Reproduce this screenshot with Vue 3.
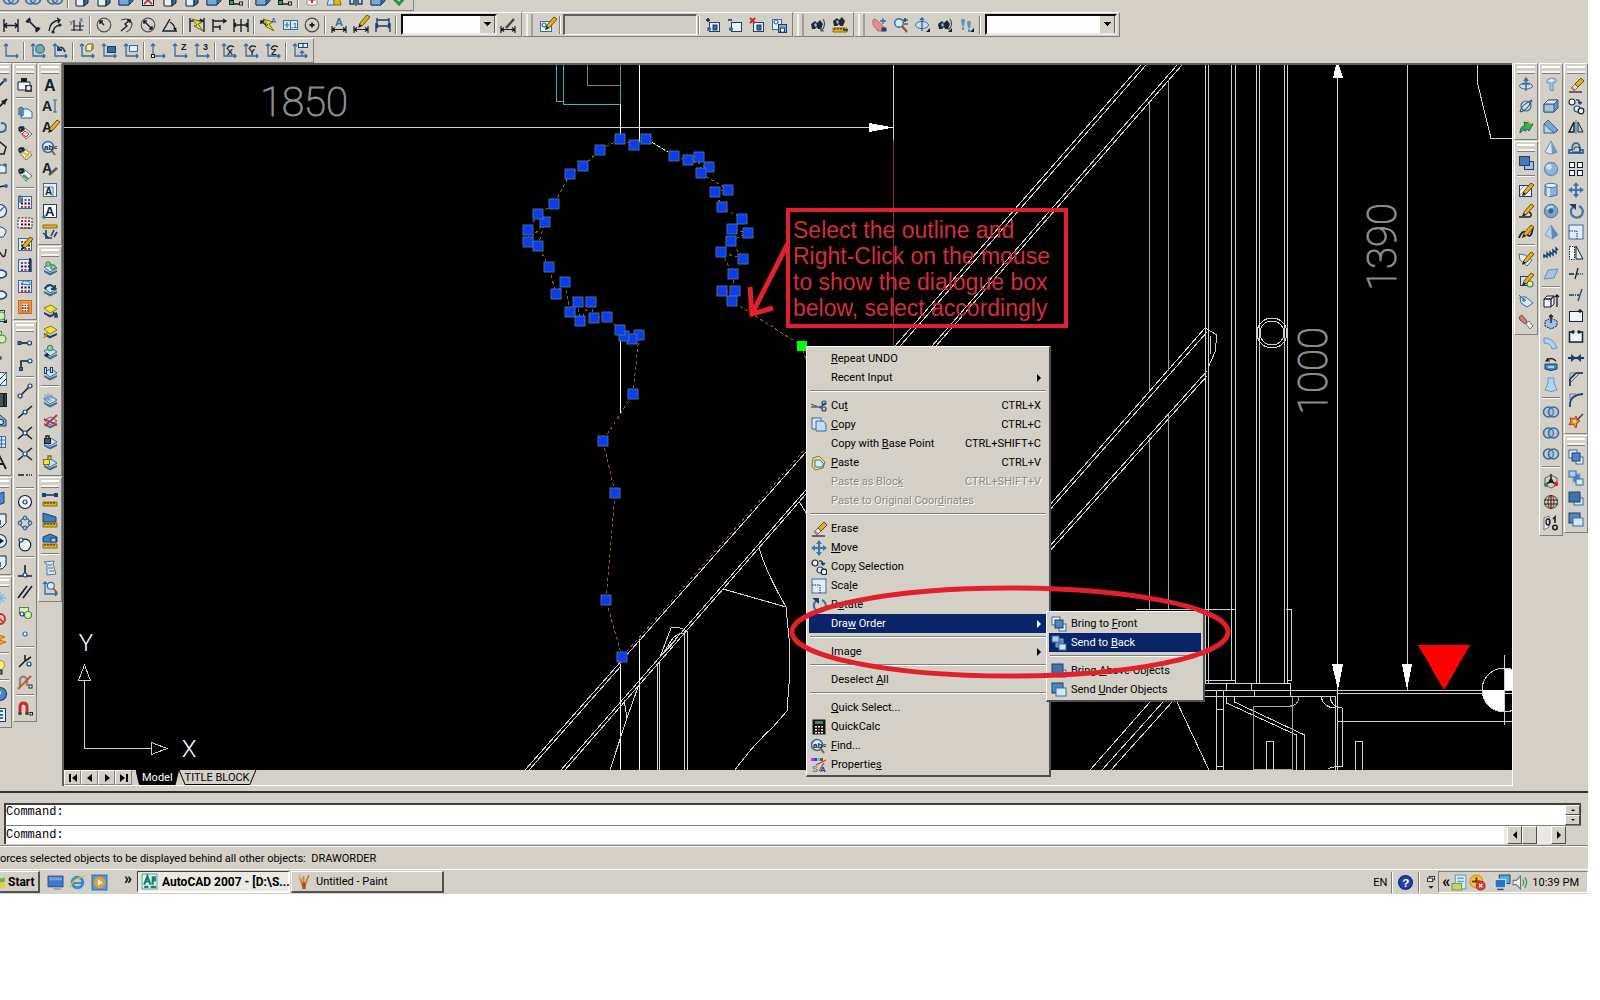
<script setup>
import { ref } from "vue";

const INK = "#16202c";
const BLUE = "#3a6a9e";
const NAVY = "#1c3f6e";
const PALE = "#c9dff2";
const GOLD = "#e2b41c";
const RED = "#cc2a2a";

// Tiny helpers for the 16x16 toolbar glyphs
const line = (d, c = INK, w = 1.4) => `<path d="${d}" fill="none" stroke="${c}" stroke-width="${w}"/>`;
const area = (d, f = BLUE, c = "none") => `<path d="${d}" fill="${f}" stroke="${c}"/>`;
const ring = (x, y, r, c = INK, f = "none", w = 1.2) =>
  `<circle cx="${x}" cy="${y}" r="${r}" fill="${f}" stroke="${c}" stroke-width="${w}"/>`;
const box = (x, y, w, h, f = PALE, c = BLUE) =>
  `<rect x="${x}" y="${y}" width="${w}" height="${h}" fill="${f}" stroke="${c}"/>`;
const letter = (t, x, y, s, c = INK) =>
  `<text x="${x}" y="${y}" font-size="${s}" font-weight="700" font-family="Liberation Sans, sans-serif" fill="${c}">${t}</text>`;

const pencil = area("M5 13L6 9L13 1L16 3L9 11Z", GOLD, "#6b4a10") + area("M4 14L5.5 10L8 12Z", INK);
const axes = line("M3 1V13H15M1 3L3 1L5 3M13 11L15 13L13 15", BLUE, 1.3);
const dims = line("M1 9V16M15 9V16M1 12.5H15M4 10.5L1.5 12.5L4 14.5M12 10.5L14.5 12.5L12 14.5", INK, 1.2);
const bolt = area("M3 2L13 5L9 7L14 14L5 9L8 8Z", "#e6e02a", "#6d6a10");
const layers = area("M2 7L9 4L15 8L8 12Z", PALE, BLUE) + area("M2 10L8 13L15 10V12L8 15.5L2 12Z", BLUE);
const goldLayers = area("M2 6L9 3L15 7L8 11Z", "#f2e23a", "#8a7a10") + area("M2 10L8 13L15 10V12L8 15.5L2 12Z", NAVY);
const dots = [4, 7.5, 11]
  .map((x) => [5, 8.5, 12].map((y, i) => `<rect x="${x}" y="${y}" width="2" height="2" fill="${i === 1 ? INK : RED}"/>`).join(""))
  .join("");
const grid = box(1.5, 2.5, 13, 12, "#dcebf8", BLUE) + dots;
const clip = ring(4, 4, 2, INK, "none", 1.4);
const tag = area("M2 6L8 3L15 9L9 14Z", "#e8f0f5", "#5a7284") + area("M3 2L7 1L8 5L4 7Z", "#3c4650") + clip;
const ruler = area("M1 11H15V15H1Z", GOLD, "#8a6a10") + line("M3 11V13M6 11V13M9 11V13M12 11V13", INK, 1);
const camera = area("M1 7L5 4L7 6L10 3L13 7L11 12H8L7 10L5 12H2Z", "#1d2936") + area("M4 7L6 6L7 9L5 10Z", "#9fb4c8");
const glass = ring(6, 6, 4.3, BLUE, "#d6e9f8", 1.4) + line("M9 9L14 15", "#8a5a2a", 2.2);
const knot = (x, y) => ring(x, y, 2, NAVY, "#e4f6ff", 1.2);
const corner = area("M11 15L15 15L15 11Z", INK);

const icons = {
  rings: ring(5.5, 8, 5, BLUE, "#8ebad955", 1.6) + ring(10.5, 8, 5, BLUE, "#8ebad955", 1.6),
  solid: area("M2 4H10V15H2Z", "#e6eef5", INK) + area("M10 4L14 1V12L10 15Z", BLUE, INK),
  solidx: box(2.5, 3.5, 11, 11, "#e6eef5", INK) + line("M4 5L12 13M12 5L4 13", RED, 1.8),
  cubefill: area("M5 1H15V10L11 14H1V5Z", BLUE, NAVY) + area("M1 5H11V14H1Z", "#79a8d4", NAVY),
  tree: line("M3 3V13H12M6 8H12", INK) + box(1.5, 9.5, 4, 4, "#4c9c4c", INK) + box(11.5, 11, 3, 3, PALE, INK),
  plusred: area("M3 2H13V14H3Z", "#f4f4f4", "#999") + line("M8 5V12M4.5 8.5H11.5", RED, 2),
  mirrorgold: area("M1 14L4 3L8 3V14Z", PALE, BLUE) + area("M8 14V3L12 1L15 14Z", GOLD, "#8a6a10"),
  shells: line("M2 2V13H6V2M10 2V13H14V2M8 1V15", NAVY, 1.4),
  check: line("M2 8L7 13L15 4", "#2b9448", 3) + area("M4 3H10V7H4Z", RED),
  dimLinear: line("M1 2V15M15 2V15M1 8.5H15M4 6L1.5 8.5L4 11M12 6L14.5 8.5L12 11"),
  dimAligned: line("M1 5L5 1M11 15L15 11M3 3L13 13M3 6V3H6M10 13H13V10", INK, 1.7),
  dimArc: line("M2 14Q3 4 13 3M10 1L13 3L11 6M6 15Q7 9 13 8", INK) + ring(6, 15, 1) + ring(13, 8, 1),
  dimOrd: line("M5 3V14M5 9H15M11 5V14M2 13H14", INK, 1.2) + letter("Y", 0, 8, 6, BLUE) + letter("X", 10, 5, 6, BLUE),
  dimRadius: ring(8, 8, 6.8, "#555") + line("M8 8L4 4M4 7V4H7"),
  dimJog: line("M3 3Q14 0 14 8Q13 13 8 15", "#555", 1.2) + line("M3 14L9 9L7 7L12 3M9 3H12V6"),
  dimDia: ring(8, 8, 6.8, "#555") + line("M4 4L12 12M4 7V4H7M12 9V12H9"),
  dimAngle: line("M8 2L1 14H15M8 5Q13 8 13 13", INK, 1.4) + area("M11 11L15 11L13 14Z", INK),
  dimQuick: line("M1 1V15M15 1V15M1 4H15M11 2L14 4L11 6") + bolt,
  dimBase: line("M2 2V15M2 4H15M9 8V13M2 10H9M12 2L15 4L12 6"),
  dimCont: line("M1 2V15M8 2V15M15 2V15M1 8H15M3 6L1 8L3 10M13 6L15 8L13 10"),
  leader: bolt + line("M1 4L6 8M1 7V4H4", INK, 1.6) + letter("A", 11, 6, 7, BLUE),
  tol: box(1.5, 3.5, 14, 9, "#dcebf8", BLUE) + line("M8.5 3.5V12.5M5 5V11M2.5 8H7.5", BLUE, 1.1) + letter(".1", 9, 11, 7, BLUE),
  center: ring(8, 8, 6.8, "#444") + line("M8 5.5V10.5M5.5 8H10.5", INK, 1.8),
  dimEdit: letter("A", 4, 9, 11, BLUE) + dims,
  dimPencil: dims + `<g transform="translate(1 -3)">${pencil}</g>`,
  dimUpdate: line("M2 1V8M14 1V8M2 3H14M1 6V15M15 6V15M1 9H15M3 7L1 9L3 11M13 7L15 9L13 11", NAVY),
  dimStyle: dims + line("M6 11L14 2", "#444", 2.4),
  refEdit: box(1.5, 4.5, 11, 10, "#e8f2fb", BLUE) + ring(5, 8, 2, BLUE) + `<g transform="translate(2 -1)">${pencil}</g>`,
  refAdd: box(4.5, 5.5, 10, 9, "#e8f2fb", NAVY) + box(8, 8, 4, 5, BLUE, NAVY) + line("M1 3H5M3 1V5", INK) + ring(4, 12, 1.5, BLUE, BLUE),
  refSub: box(4.5, 5.5, 10, 9, "#e8f2fb", NAVY) + line("M1 3H5", INK) + ring(4, 12, 1.5, BLUE, BLUE),
  refDel: box(4.5, 5.5, 10, 9, "#e8f2fb", NAVY) + box(8, 8, 4, 5, BLUE, NAVY) + line("M1 1L6 6M6 1L1 6", RED, 2),
  refSave: box(1.5, 2.5, 9, 10, "#e8f2fb", BLUE) + ring(5, 5, 2, BLUE) + box(7.5, 7.5, 8, 8, "#7fa9d6", NAVY) + box(9.5, 11, 4, 4, "#fff", NAVY),
  orbit: camera + line("M13 2Q17 8 11 14M11 11V14H14", "#40566e", 1.2),
  camMove: `<g transform="translate(0 -3)">${camera}</g>` + ruler + line("M11 13H16", INK),
  pan: area("M2 3L4 2L10 7L13 10L12 14L7 14L2 8Z", "#e08f92", "#b6686c") + line("M12 1V7M9 4H15", BLUE, 1.3) + box(11, 11, 4, 3, NAVY, NAVY),
  zoom: glass + line("M12 1V5M10 3H15M11 7H15", INK, 1.1),
  orbit3d: `<ellipse cx="7" cy="8" rx="6.5" ry="3.5" fill="${PALE}" stroke="${BLUE}"/>` + line("M7 1V14M5 3L7 1L9 3", BLUE) + corner,
  swivel: camera + line("M13 2Q17 8 11 13", "#40566e", 1.2) + corner,
  walk: area("M2 3Q5 0 6 4L5 9H3ZM8 5Q11 2 12 6L11 11H9Z", "#5d93bd") + area("M3 10H5V13H3ZM9 12H11V15H9Z", "#5d93bd") + corner,
  ucs: axes,
  ucsWorld: axes + ring(10, 6, 4.3, BLUE, "#6fb0a8"),
  ucsPrev: axes + line("M6 7Q10 1 13 9M6 3V7H10", NAVY, 1.8),
  ucsFace: axes + area("M7 3L9 1H14V6L12 8H7Z", "#f0ead0", "#5f5a1a") + area("M12 3L14 1V6L12 8Z", "#a8982a"),
  ucsObj: axes + box(6.5, 3.5, 8, 6, BLUE, NAVY),
  ucsView: axes + box(6.5, 2.5, 8, 6, "#e6f0fa", BLUE),
  ucsOrigin: axes + box(1.5, 11.5, 3, 3, "#fff", INK),
  ucsZ: axes + letter("Z", 9, 7, 9),
  ucs3: axes + letter("3", 9, 7, 9),
  rotX: axes + line("M6 6Q8 1 13 4", INK) + letter("X", 6, 12, 9),
  rotY: axes + line("M6 6Q8 1 13 4", INK) + letter("Y", 6, 12, 9),
  rotZ: axes + line("M6 6Q8 1 13 4", INK) + letter("Z", 6, 12, 9),
  ucsApply: axes + box(6.5, 0.5, 9, 4, "#e6f0fa", NAVY) + line("M10 8V13M8 10L10 8L12 10M11 1V4", BLUE),

  line: line("M2 14L14 2", INK, 1.6) + ring(13, 3, 1.5, BLUE, BLUE),
  xline: line("M1 15L15 1", INK, 1.8) + area("M9 3L15 1L13 7Z", INK),
  pline: line("M2 13H9Q14 13 14 8Q14 4 9 4", BLUE, 1.8),
  polygon: line("M8 2L14 7L12 14H4L2 7Z", INK, 1.5),
  rect: box(1, 4, 13, 8, "#e6eef5", NAVY) + ring(13, 4, 1.2, BLUE, BLUE),
  arc: line("M2 14Q2 4 14 4", INK) + ring(14, 4, 1.3, BLUE, BLUE),
  circle: ring(8, 8, 6.5, NAVY, "#e6f0fa") + line("M8 8L12 4", BLUE),
  cloud: area("M4 12Q0 8 5 6Q7 1 11 4Q16 6 13 10Q12 14 8 13Z", "#e6f0fa", NAVY),
  spline: line("M2 12Q5 2 9 9T14 4", INK),
  ellipse: `<ellipse cx="8" cy="8" rx="6.5" ry="4" fill="#e6f0fa" stroke="${NAVY}" stroke-width="1.5"/>`,
  insert: box(1.5, 2.5, 11, 11, "#e6f0fa", NAVY) + ring(9, 8, 4, "#4c8c3c", "#d2e8b8") + corner,
  block: box(1.5, 2.5, 8, 7, "#d2e8b8", "#4c8c3c") + ring(10, 10, 4, "#4c8c3c", "#d2e8b8"),
  point: ring(8, 8, 1.5, BLUE, BLUE),
  hatch: box(1.5, 1.5, 13, 13, "#e6f0fa", BLUE) + line("M1 9L9 1M1 15L15 1M7 15L15 7", NAVY, 1),
  gradient: box(1.5, 1.5, 13, 13, "#4b544c", INK) + line("M4 1V15M12 1V15", INK, 2),
  region: area("M2 13V6L8 2L14 7V13Z", "#7fb0da", NAVY) + ring(9, 9, 2.5, NAVY, "#e6f0fa"),
  table: box(1.5, 2.5, 12, 11, "#e6f0fa", BLUE) + line("M1.5 6H14M1.5 10H14M5.5 2.5V14M9.5 2.5V14", BLUE, 1.2),
  mtext: line("M2 14L8 2L14 14M5 9H11", INK, 1.8),
  sheetBlue: area("M3 4L12 1V12L3 15Z", "#4a86cc", NAVY),
  play: ring(8, 8, 6.5, NAVY, "#e6f0fa") + area("M6 4L12 8L6 12Z", INK),
  cubeDark: area("M5 2H14V11L10 15H1V6Z", "#e6eef5", INK) + area("M4 8H9V13H4Z", BLUE),
  sun: line("M8 2V14M2 8H14M4 4L12 12M12 4L4 12", "#7fb8dc", 1.3),
  noSign: ring(8, 8, 5, RED, "#f4d0b8", 2) + line("M5 5L11 11", RED, 1.6),
  flame: area("M3 2L13 5L7 8L14 10L4 14Z", "#f0b020", "#c07010"),
  bulb: ring(8, 6, 4.5, "#b8a020", "#f6ee7a") + box(6, 11, 4, 4, "#777", INK),
  globe: ring(8, 8, 6.5, NAVY, "#4a86cc") + area("M6 4Q10 5 9 8Q6 9 5 7Z", "#cfe3f7"),
  calcBlue: box(2.5, 1.5, 11, 13, "#e6f0fa", NAVY) + line("M5 4H11M5 8H11M5 11H11", BLUE, 1.8),

  bag: area("M1 5H13V13H1Z", "#f4f4f4", INK) + area("M4 1H10V5H4Z", INK) + area("M8 8H15V15H8Z", "#39434d") + ring(11.5, 11, 1.5, "#fff", "#fff"),
  attach: area("M4 5H11L15 8V14H4Z", "#e8f2fb", BLUE) + line("M2 11V5Q4 2 6 5V11Q4 13 4 10V6", BLUE, 1.4),
  tagRed: tag + area("M8 6L12 9L9 12L5 9Z", "#f4d4d4", RED),
  tagGold: tag + line("M7 13L14 5M5 6L12 10", GOLD, 1.8),
  tagGreen: tag + line("M6 8L11 12", "#4a9a4a", 2.5),
  gridClip: grid + line("M3 1V8H5V3", BLUE),
  gridDash: `<rect x="1" y="3" width="14" height="10" fill="#eee" stroke="${INK}" stroke-dasharray="2 1.4"/>` + dots,
  gridPencil: grid + pencil,
  gridSide: grid + line("M13 1V15", NAVY, 2),
  gridCloud: grid + area("M5 6Q5 2 9 3Q14 3 13 7Z", PALE, BLUE),
  gridGold: box(1.5, 1.5, 13, 13, "#f3a23c", "#c46a10") + box(4, 4, 8, 9, "#f2e8dc", "#c46a10") + `<g transform="translate(2 2) scale(.75)">${dots}</g>`,
  snapTrack: line("M2 8H11", INK, 1.6) + box(1, 6.5, 3, 3, BLUE, NAVY) + knot(12.5, 8),
  snapFrom: line("M4 14V5H11", INK, 1.6) + box(2.5, 11.5, 3, 3, BLUE, NAVY) + knot(13, 5),
  snapEnd: line("M3 13L13 3", INK, 1.5) + knot(13, 3) + knot(3, 13),
  snapMid: line("M1 14L15 2", INK, 1.6) + knot(8, 8),
  snapInt: line("M1 2L15 14M15 2L1 14", INK, 1.6) + knot(8, 8),
  snapApp: line("M1 2L6 6M10 10L15 14M15 2L10 6M6 10L1 14", INK, 1.6) + knot(8, 8),
  snapExt: line("M1 8H7M9 8H11M12 8H13M14 8H15", INK, 1.6),
  snapCen: ring(8, 8, 6.5, INK, "#f4f8fb") + knot(8, 8),
  snapQuad: ring(8, 8, 5, INK, "none", 1) + ring(8, 3, 1.8, BLUE, "#9fc8e8") + ring(8, 13, 1.8, BLUE, "#9fc8e8") + ring(3, 8, 1.8, BLUE, "#9fc8e8") + ring(13, 8, 1.8, BLUE, "#9fc8e8"),
  snapTan: ring(8, 9, 5.8, INK, "#eef2f4") + knot(4, 4),
  snapPerp: line("M8 2V13M1 13H15", INK, 1.6) + knot(8, 12),
  snapPar: line("M1 14L10 2M6 14L15 2", INK, 1.6),
  snapIns: box(2.5, 2.5, 9, 6, "#d9efb8", "#4c8c3c") + ring(11, 10, 3.5, "#4c8c3c", "#d9efb8") + knot(5, 9),
  snapNode: ring(8, 8, 2, BLUE, "#e4f6ff"),
  snapNear: line("M2 14L8 8L8 2M8 8L14 4", INK, 1.6) + knot(12, 11),
  snapNone: line("M3 13V5Q6 0 10 5V12", "#8a8a8a", 2.4) + line("M1 15L14 2", "#d2502a", 2) + box(12, 11, 3, 3, "#fff", INK),
  magnet: line("M3 13V6Q3 2 6.5 2Q10 2 10 6V13", RED, 3) + area("M1.5 11H4.5V14H1.5ZM8.5 11H11.5V14H8.5Z", "#444") + box(13, 11.5, 2.5, 2.5, "#fff", INK),

  textA: letter("A", 2, 14, 16),
  textI: letter("A", 0, 13, 14) + line("M11 2H15M13 2V14M11 14H15", BLUE, 1.2),
  textPencil: letter("A", 0, 13, 14) + `<g transform="translate(2 0)">${pencil}</g>`,
  findText: ring(6, 7, 5.5, BLUE, "#d6e9f8", 1.5) + letter("ab", 2, 10, 8) + line("M10 11L13 15", "#8a5a2a", 2) + letter("c", 12, 9, 6),
  textBrush: letter("A", 0, 12, 14) + line("M7 14L15 7", "#555", 2.4),
  textScale: box(1.5, 1.5, 13, 13, "#e8f2fb", BLUE) + letter("A", 3, 13, 10) + line("M1 5H11V15", "#555", 0.8),
  textJust: box(1.5, 1.5, 13, 13, "#fff", NAVY) + letter("A", 3, 13, 13) + ring(2, 14, 1.2, BLUE, BLUE),
  textSpace: area("M1 1H15V4H1Z", GOLD, "#8a6a10") + line("M4 6V14H10M1 9L7 14M12 6L9 12M15 8L12 13", NAVY, 1.6),
  layProps: layers + ring(6, 4, 2.2, "#3f8f5c", "#9ed0b0") + ring(11, 7, 2.2, "#3f8f5c", "#9ed0b0"),
  layPrev: layers + line("M3 8Q7 0 13 8M9 8H13V4", NAVY, 1.8),
  layGoldA: goldLayers + line("M11 10L15 15M12 15H15V12", NAVY, 1.6),
  layGoldB: goldLayers + line("M2 15L6 9", "#b89a10", 1.8),
  layIso: layers + ring(8, 4, 2.6, "#3f8f5c", "#9ed0b0") + line("M5 9V13M3 11H7", INK, 1.3),
  layUn: layers + box(2.5, 2.5, 2, 6, PALE, NAVY) + box(8.5, 2.5, 2, 5, PALE, NAVY),
  layFrz: layers + line("M6 1V11M1 6H11M2.5 2.5L9.5 9.5M9.5 2.5L2.5 9.5", "#7d9ec0", 1.1),
  layOff: layers + line("M2 6L15 12M15 2L3 13", RED, 1.8),
  layLock: layers + box(2.5, 4.5, 6, 5, "#47546a", INK) + line("M4 4V2H7V4", INK),
  layUnlock: layers + box(1.5, 4.5, 6, 5, "#f0e436", "#7a7410") + line("M6 4V1H9V4", "#7a7410"),
  dist: line("M2 4H14", NAVY, 1.6) + area("M0 2H4V6H0ZM12 2H16V6H12Z", NAVY) + ruler,
  areaM: area("M1 1L14 5V10H1Z", "#3f7fb8", NAVY) + ruler,
  massM: area("M1 4L8 1L15 4V9H1Z", "#3f7fb8", NAVY) + box(9, 5, 5, 4, "#8fd0e8", NAVY) + ruler,
  list: area("M2 2L12 1L11 4L14 14L5 15L5 4Z", "#dfe9f2", "#56789a") + line("M6 5H10M6 8H11M7 11H12", BLUE, 1.2),
  idPoint: axes + `<g transform="translate(4 0) scale(.8)">${glass}</g>`,

  orb: `<ellipse cx="8" cy="9" rx="6.5" ry="3" fill="${PALE}" stroke="${BLUE}"/>` + line("M8 1V14M6 4L8 1L10 4M4 7H12", BLUE, 1.5),
  planet: ring(8, 8, 5, BLUE, "#cfe0ee") + line("M2 14Q3 7 14 2M2 14Q10 12 14 2", "#44586c", 1.1),
  swirl: area("M2 14Q2 7 7 7L6 3L15 5L11 12L9 10Q5 10 2 14Z", "#35b05a", "#1a6a34") + area("M9 1L15 5L11 5Z", GOLD) + area("M4 9L9 11L7 13Z", BLUE),
  squares: box(6.5, 6.5, 9, 8, "#9cc4e6", NAVY) + box(1.5, 1.5, 10, 9, "#4a7ab0", NAVY),
  hatchPencil: box(1.5, 3.5, 12, 11, "#e6f0fa", NAVY) + line("M2 8L6 4M2 13L11 4M6 14L13 7", "#888", 0.8) + pencil,
  curvePencil: line("M1 14H12Q15 11 11 9", INK) + pencil,
  splinePencil: line("M1 14Q5 4 9 10T15 3", INK, 1.8) + pencil,
  tagPencil: area("M1 3L7 4L14 9L9 15L2 9Z", "#e8f4fa", BLUE) + pencil,
  blockPencil: box(2.5, 4.5, 8, 9, PALE, NAVY) + ring(12, 12, 3, "#4c8c3c", "#d9efb8") + pencil,
  tagBlue: area("M2 4L8 4L15 10L9 14L3 10Z", "#d6ebf8", BLUE) + ring(6, 7, 1.2, BLUE) + line("M1 2L6 7", BLUE, 1),
  tagHand: area("M1 3L4 1L9 7L7 10L2 6Z", "#c08078", "#8a504a") + area("M8 10L11 7L15 12L12 15Z", "#f0f0f0", "#777"),
  polysolid: area("M4 3L8 1L13 2V5L10 6V14L7 13V6L4 6Z", "#9fc4e6", "#6f96be") + area("M8 2L12 3L9 5L5 4Z", "#e2eef8"),
  boxSolid: area("M1 6L5 2H15V10L11 14H1Z", "#6e94bc", "#38597c") + area("M1 6H11V14H1Z", "#a9c3de", "#38597c") + area("M1 6L5 2H15L11 6Z", "#dbe8f4", "#38597c"),
  wedge: area("M1 5L5 1L15 11L11 14H1Z", "#b9d0e6", "#3f6288") + area("M5 1L15 11L11 14L1 5Z", "#7fa6cf", "#3f6288"),
  cone: area("M8 1L14 12Q8 16 2 12Z", "#dbe8f4", "#6f8cab") + area("M8 2L14 12L9 14Z", "#6f98c2"),
  sphere: ring(8, 8, 6.6, "#6a8cb2", "#8fb2d8") + ring(6, 6, 2.2, "#cfe2f4", "#cfe2f4"),
  cyl: area("M2 3V13Q8 16 14 13V3Z", "#8fb2d8", "#476e9a") + area("M4 4H7V14H4Z", "#cfe2f4") + `<ellipse cx="8" cy="3.5" rx="6" ry="2.2" fill="#e2eef8" stroke="#476e9a"/>`,
  torus: ring(8, 8, 4.6, "#7ba3cd", "#3f6288", 4.4) + ring(8, 8, 6.8, "#3f6288", "none", 0.8) + line("M4 6Q6 3 10 4", "#dcebf8", 1.6),
  pyramid: area("M8 1L15 11L9 15L2 11Z", "#b4d0ec", "#7b9fc6") + area("M8 1L15 11L9 15Z", "#5f88bd"),
  helix: line("M1 13L1 10L4 12L4 8L7 11L7 7L10 10L10 5L13 8L13 3L15 5", NAVY, 1.5),
  plane: area("M5 4L15 3L11 12L1 13Z", "#a9c3de", "#6f8cab"),
  extrude: area("M1 6L4 3H11V11L8 14H1Z", "#f2f2f2", INK) + line("M1 6H8V14M8 6L11 3M14 14V2M12 4L14 2L16 4", INK, 1.3),
  pushpull: `<path d="M8 4L14 7V12L8 15L2 12V7Z" fill="#9cc0e2" stroke="${INK}" stroke-dasharray="2 1"/>` + line("M8 9V1M6 3L8 1L10 3", INK),
  sweep: area("M1 3Q10 2 14 13L9 14Q8 8 1 8Z", "#b2d0ec", "#6b94bd"),
  revolve: area("M2 8H14V13Q8 16 2 13Z", "#4a83be", NAVY) + area("M5 10H11V12H5Z", "#b2d4f0") + line("M3 5Q8 0 13 5M5 2L3 5L7 5", INK, 1.2),
  loft: area("M5 1H11L11 6L14 13Q8 16 2 13L5 6Z", "#b2d4f0", "#6b94bd"),
  tripod: line("M8 8V1M8 8L2 12M8 8L14 12", INK, 1.6) + line("M2 5L8 2L14 5V12L8 15L2 12Z", "#555", 0.9) + ring(8, 8, 1.5, INK, INK) + ring(13, 11, 1.6, RED, RED) + ring(3, 12, 1.4, "#2c8c4c", "#2c8c4c"),
  sphereRgb: ring(8, 8, 6.5, "#2c7c4c") + `<ellipse cx="8" cy="8" rx="3" ry="6.5" fill="none" stroke="${RED}" stroke-width="1.3"/>` + line("M1 6H15M1 10H15M8 1V15", "#222", 1.1),
  bits: area("M1 3L6 1V12L1 15Z", "#eee", "#777") + `<ellipse cx="5" cy="7" rx="2" ry="3" fill="none" stroke="${INK}" stroke-width="1.400"/>` + line("M10 4L12 2V8", INK, 1.6) + ring(12, 12.5, 2.2, INK, "none", 1.6),

  erase: line("M1 15H14", INK, 1.2) + area("M3 11L7 7L10 10L6 14Z", "#e8e8f0", "#766") + area("M7 7L13 1L16 4L10 10Z", GOLD, "#6b4a10") + area("M3 11L4.5 9.5L7.5 12.5L6 14Z", "#e07a6a"),
  copyObj: ring(4, 4, 3, INK, "#eef4f8") + ring(9, 11, 3, NAVY, "#eef4f8") + ring(13, 13, 2.8, INK, "#eef4f8") + line("M8 2Q12 1 12 6M10 4L12 6L14 4", NAVY),
  mirror: line("M6 3V13H1Z", INK) + area("M10 3V13H15Z", "#b4d0ec", INK) + line("M8 1V15", BLUE, 1),
  offset: line("M1 13H15V10H12Q12 3 8 3Q4 3 4 10H1Z", BLUE, 1.8) + line("M4 12H12V9Q12 7 8 7Q6 7 6 10", NAVY, 1.1),
  array: box(1.5, 1.5, 5, 5, "#eef4f8", INK) + box(9.5, 1.5, 5, 5, "#eef4f8", INK) + box(1.5, 9.5, 5, 5, "#eef4f8", INK) + box(9.5, 9.5, 5, 5, "#eef4f8", INK),
  move: line("M8 2V14M2 8H14", "#3f74ad", 2) + area("M8 0L11 4H5ZM8 16L11 12H5ZM0 8L4 5V11ZM16 8L12 5V11Z", "#3f74ad"),
  rotate: line("M5 4A6 6 0 1 0 11 3", "#3f74ad", 2.2) + area("M1 1H8V7Z", NAVY),
  scale: box(1, 1, 14, 14, "#dfedf8", BLUE) + `<path d="M1 7H9V15" fill="none" stroke="${INK}" stroke-dasharray="1.5 1"/>`,
  stretch: area("M8 1L15 14H8Z", "#dfedf8", INK) + `<rect x="1.5" y="1.5" width="5" height="13" fill="#fff" stroke="${INK}" stroke-dasharray="1.5 1"/>`,
  trim: line("M1 8H6M10 2L7 13", INK, 1.3) + line("M9 8H11M12 8H13M14 8H15", NAVY, 1.3),
  extend: line("M1 8H6M14 2L10 14", NAVY, 1.3) + line("M7 8H8M9 8H11", INK, 1.3),
  breakPt: box(1.5, 3.5, 13, 10, "#eef4f8", INK) + ring(12, 3, 1.2, INK, INK),
  breakGap: area("M1 3H15V13H1Z", "#eef4f8") + line("M5 3H1.5V13H14.5V3H11", INK, 1.5) + ring(5, 3, 1.1, INK, INK) + ring(11, 3, 1.1, INK, INK),
  join: line("M0 8H16", INK, 1.8) + area("M3 4L8 8L3 12ZM13 4L8 8L13 12Z", NAVY),
  chamfer: line("M2 15V8L8 2H15", INK, 1.6) + line("M2 8V2H8", BLUE, 0.8) + line("M2 12L11 3", BLUE, 1),
  fillet: line("M2 15V11Q3 3 15 2", NAVY, 1.8) + line("M2 8V2H8", BLUE, 0.8),
  explode: area("M2 5L6 6L8 3L9 6L12 8L9 10L8 15L5 11L1 12L3 8Z", "#f0902a", "#b2341c") + area("M5 7L8 7L8 10L5 10Z", "#f8e060") + line("M9 7L15 1", "#444", 1.6),

  toFront: box(1, 1, 8, 8, "#e6f2fb", BLUE) + box(8, 8, 7, 7, "#e6f2fb", BLUE) + box(4, 4, 8, 8, "#4f86c0", NAVY),
  toBack: box(5, 4, 7, 8, "#4f86c0", "#7fa9d6") + box(1, 1, 7, 6, "#a9cdec", BLUE) + box(8, 9, 7, 6, "#d4e8f8", BLUE),
  above: box(6, 7, 9, 7, "#d4e8f8", BLUE) + box(1, 1, 11, 10, "#4272a8", NAVY),
  under: box(1, 1, 11, 10, "#4f86c0", NAVY) + box(5, 6, 10, 8, "#d4e8f8", BLUE),
  cut: line("M0 6L10 10M0 9H10", "#5f6470", 1.3) + line("M9 10L14 5", NAVY, 1.2) + ring(13, 5, 2, NAVY) + ring(13, 11, 2, NAVY),
  copy: box(1, 1, 9, 11, "#d4e8f8", BLUE) + area("M5 4H12L15 7V14H5Z", "#c3ddf3", BLUE),
  paste: area("M2 3L8 1L14 7L12 13L4 15L1 11Z", "#e8dc90", "#8a7a30") + area("M4 5H9L12 8V12H4Z", "#d8eaf8", BLUE),
  calc: box(2, 1, 12, 14, "#141414", "#141414") + area("M4 2H12V5H4Z", "#5a7a60") + `<g fill="#eee"><path d="M4 7h2v1.500h-2zM7 7h2v1.500h-2zM10 7h2v1.500h-2zM4 10h2v1.500h-2zM10 10h2v1.500h-2zM4 13h2v1.500h-2zM7 13h2v1.500h-2zM10 13h2v1.500h-2z"/><path fill="#d33" d="M7 10h2v1.500h-2z"/></g>`,
  props: area("M0 1H3V4H0Z", "#e22ae2") + area("M3 1H6V4H3Z", "#2a4ae2") + area("M6 1H9V4H6Z", "#2ae2d8") + area("M9 1H12V4H9Z", RED) + letter("S", 1, 15, 9, "#7a7a8a") + letter("A", 9, 15, 8, NAVY) + line("M5 8L15 3M8 14L13 6", "#b24a5a", 1.3),

  desktop: box(1, 2, 14, 10, "#3f76c8", "#2a4f94") + area("M2 3H14V6H2Z", "#6fa0e4") + area("M6 13H13V15H6Z", "#9aa6b8"),
  ie: ring(8, 8, 5, "#2e8fd8", "none", 2.8) + line("M4 8.500H13", "#2e8fd8", 2) + line("M1 13Q3 4 15 2", "#e8b92e", 1.4),
  player: box(1, 1, 14, 14, "#49a0dc", "#2a70ac") + ring(8, 8, 4.8, "#f29a2a", "#f29a2a") + area("M6.500 5L11 8L6.500 11Z", "#fff"),
  acad: box(1, 1, 14, 14, "#e6f4f0", "#5aa698") + line("M3 11L6 3L9 11M4 8H8M11 3V11M13 3V8M3 13H7M9 13H14", "#12806c", 2),
  paint: line("M4 2L8 15M8 3V15M13 2L8 15", "#b98a3a", 1.8) + area("M3 1H6V5H3Z", "#e2b8a0") + area("M7 9H10V15H7Z", "#b8402c"),
  flag: area("M1 4Q4 2 7 4V8Q4 6 1 8Z", "#e2582c") + area("M8 4Q11 6 14 4V8Q11 10 8 8Z", "#6cb83a") + area("M1 9Q4 7 7 9V13Q4 11 1 13Z", "#3a76d8") + area("M8 9Q11 11 14 9V13Q11 15 8 13Z", "#f2c830"),
  help: ring(8, 8, 6.5, "#15257a", "#2340b0") + letter("?", 5, 12, 11, "#fff"),
  restore: box(6, 1, 6, 4, "#eee", INK) + box(4, 3, 6, 4, "#eee", INK) + area("M5 12H11L8 15Z", INK),
  trayNotes: box(4, 1, 10, 13, "#d8eef8", "#5aa0c8") + area("M1 9H10V15H1Z", "#c8cf70", "#7a9a40") + line("M6 4H12M6 7H12", "#5aa0c8"),
  trayWarn: ring(7, 7, 6, "#d89a1c", "#f6c23a") + line("M3 7H11M7 3V8", "#5a3a10", 1.8) + ring(11, 11, 4, RED, "#e03a3a") + line("M9.500 9.500L12.500 12.500M12.500 9.500L9.500 12.500", "#fff", 1.3),
  trayNet: box(5, 1, 10, 8, "#58a8e8", "#1e4f8a") + box(1, 5, 10, 8, "#2f74c0", "#d8e6f4") + line("M3 14.500H9", "#33485e"),
  traySound: area("M1 6H4L8 2V14L4 10H1Z", "#f2f4f6", "#6a7480") + line("M10 5Q12 8 10 11M12 3Q15.500 8 12 13", "#3f9a50", 1.2),
};

// "|" is a separator inside a toolbar
const topRow = "rings rings rings | solid solid cubefill solidx solid solid cubefill tree | cubefill tree | plusred mirrorgold shells cubefill check".split(" ");
const dimRow =
  "dimLinear dimAligned dimArc dimOrd | dimRadius dimJog dimDia dimAngle | dimQuick dimBase dimCont | leader tol center | dimEdit dimPencil dimUpdate |".split(" ");
const ucsRow = "ucs | ucsWorld ucsPrev | ucsFace ucsObj ucsView | ucsOrigin ucsZ ucs3 | rotX rotY rotZ | ucsApply".split(" ");
const refRow = ["refAdd", "refSub", "refDel", "refSave"];
const walkRow = ["pan", "zoom", "orbit3d", "swivel", "walk"];

const leftDocks = [
  [
    "line xline pline polygon rect arc circle cloud spline ellipse ellipse insert block point hatch gradient region table mtext",
    "sheetBlue cubeDark play cubeDark",
    "sun noSign flame | bulb | globe calcBlue",
  ],
  [
    "bag | attach tagRed tagGold tagGreen | gridClip gridDash gridPencil gridSide gridCloud gridGold",
    "snapTrack snapFrom | snapEnd snapMid snapInt snapApp snapExt | snapCen snapQuad snapTan | snapPerp snapPar snapIns snapNode | snapNear snapNone | magnet",
  ],
  [
    "textA textI textPencil findText textBrush textScale textJust textSpace",
    "layProps layPrev layGoldA layGoldB layIso layUn | layFrz layOff layLock layUnlock",
    "dist areaM massM | list idPoint",
  ],
].map((dock) => dock.map((bar) => bar.split(" ")));

const rightDocks = [
  ["orb planet swirl", "squares | hatchPencil curvePencil splinePencil | tagPencil blockPencil tagBlue tagHand"],
  ["polysolid boxSolid wedge cone sphere cyl torus pyramid helix plane | extrude pushpull sweep revolve loft | rings rings rings | tripod sphereRgb bits"],
  [
    "erase copyObj mirror offset array move rotate scale stretch trim extend breakPt breakGap join chamfer fillet explode",
    "toFront toBack above under",
  ],
].map((dock) => dock.map((bar) => bar.split(" ")));

// "&" goes before the mnemonic letter
const item = (label, opts = {}) => {
  const [before, rest] = label.includes("&") ? label.split("&") : [label, ""];
  return { before, key: rest.charAt(0), after: rest.slice(1), ...opts };
};
const divider = { divider: true };

const menu = [
  item("&Repeat UNDO"),
  item("Recent Input", { sub: true }),
  divider,
  item("Cu&t", { icon: "cut", keys: "CTRL+X" }),
  item("&Copy", { icon: "copy", keys: "CTRL+C" }),
  item("Copy with &Base Point", { keys: "CTRL+SHIFT+C" }),
  item("&Paste", { icon: "paste", keys: "CTRL+V" }),
  item("Paste as Bloc&k", { keys: "CTRL+SHIFT+V", disabled: true }),
  item("Paste to Original Coor&dinates", { disabled: true }),
  divider,
  item("Erase", { icon: "erase" }),
  item("&Move", { icon: "move" }),
  item("Cop&y Selection", { icon: "copyObj" }),
  item("Sca&le", { icon: "scale" }),
  item("R&otate", { icon: "rotate" }),
  item("Dra&w Order", { sub: true, active: true }),
  divider,
  item("Ima&ge", { sub: true }),
  divider,
  item("Deselect &All"),
  divider,
  item("&Quick Select..."),
  item("QuickCalc", { icon: "calc" }),
  item("&Find...", { icon: "findText" }),
  item("Propertie&s", { icon: "props" }),
];

const submenu = [
  item("Bring to &Front", { icon: "toFront" }),
  item("Send to &Back", { icon: "toBack", active: true }),
  divider,
  item("Bring &Above Objects", { icon: "above" }),
  item("Send &Under Objects", { icon: "under" }),
];

const menus = [
  { name: "context", items: menu },
  { name: "order", items: submenu },
];

// Vertices of the selected polyline, in drawing order
const grips = [
  [622, 657], [606, 600], [615, 493], [603, 441], [633, 394], [639, 335], [632, 339], [624, 336], [620, 330],
  [607, 317], [594, 318], [591, 302], [580, 321], [578, 302], [570, 312], [565, 282], [556, 294], [549, 267],
  [538, 246], [545, 222], [528, 242], [528, 230], [538, 214], [554, 204], [570, 174], [583, 166], [600, 150],
  [620, 139], [634, 145], [646, 139], [674, 156], [688, 160], [709, 167], [699, 157], [701, 173], [728, 190],
  [715, 192], [722, 207], [742, 219], [732, 229], [748, 233], [731, 241], [743, 259], [721, 252], [733, 274],
  [735, 291], [722, 291], [732, 301],
];
const outline = "M" + grips.map((g) => g.join(" ")).join("L") + "L802 346L806 360V448Z";

const command = ref("Command:");
const style = ref("");
const view = ref("");
const layout = ref("Model");
</script>

<template>
  <div class="app">
    <header class="bars">
      <div class="row clipped">
        <div class="bar">
          <template v-for="(name, i) in topRow" :key="i">
            <i v-if="name === '|'" class="sep"></i>
            <button v-else class="tool" :aria-label="name"><svg viewBox="0 0 16 16" v-html="icons[name]"></svg></button>
          </template>
        </div>
      </div>

      <div class="row">
        <div class="bar">
          <template v-for="(name, i) in dimRow" :key="i">
            <i v-if="name === '|'" class="sep"></i>
            <button v-else class="tool" :aria-label="name"><svg viewBox="0 0 16 16" v-html="icons[name]"></svg></button>
          </template>
          <select v-model="style" class="combo" aria-label="Dimension style"><option value=""></option></select>
          <button class="tool" aria-label="dimStyle"><svg viewBox="0 0 16 16" v-html="icons.dimStyle"></svg></button>
        </div>
        <div class="bar">
          <i class="handle"></i>
          <button class="tool" aria-label="refEdit"><svg viewBox="0 0 16 16" v-html="icons.refEdit"></svg></button>
          <i class="sep"></i>
          <input class="field" type="text" disabled aria-label="Reference name" />
          <i class="sep"></i>
          <button v-for="name in refRow" :key="name" class="tool" :aria-label="name">
            <svg viewBox="0 0 16 16" v-html="icons[name]"></svg>
          </button>
        </div>
        <div class="bar">
          <i class="handle"></i>
          <button class="tool" aria-label="orbit"><svg viewBox="0 0 16 16" v-html="icons.orbit"></svg></button>
          <button class="tool" aria-label="camMove"><svg viewBox="0 0 16 16" v-html="icons.camMove"></svg></button>
        </div>
        <div class="bar">
          <i class="handle"></i>
          <button v-for="name in walkRow" :key="name" class="tool" :aria-label="name">
            <svg viewBox="0 0 16 16" v-html="icons[name]"></svg>
          </button>
          <i class="sep"></i>
          <select v-model="view" class="combo wide" aria-label="View"><option value=""></option></select>
        </div>
      </div>

      <div class="row">
        <div class="bar">
          <template v-for="(name, i) in ucsRow" :key="i">
            <i v-if="name === '|'" class="sep"></i>
            <button v-else class="tool" :aria-label="name"><svg viewBox="0 0 16 16" v-html="icons[name]"></svg></button>
          </template>
        </div>
      </div>
    </header>

    <main class="work">
      <div class="docks left">
        <div v-for="(dock, d) in leftDocks" :key="d" class="dock">
          <div v-for="(bar, b) in dock" :key="b" class="vbar">
            <i class="vhandle"></i>
            <template v-for="(name, i) in bar" :key="i">
              <i v-if="name === '|'" class="vsep"></i>
              <button v-else class="vtool" :aria-label="name"><svg viewBox="0 0 16 16" v-html="icons[name]"></svg></button>
            </template>
          </div>
        </div>
      </div>

      <section class="drawing">
        <div class="canvas">
          <svg class="sheet">
            <g transform="translate(-64 -65)" fill="none" stroke="#d2d2d2" shape-rendering="crispEdges">
              <!-- wall and frame -->
              <path stroke="#35b8b8" d="M556.500 65V101.500H563M563.500 65V104.500H620M620.500 85V104" />
              <path stroke="#808080" d="M587.500 65V85.500H620M620.500 65V85" />
              <path stroke="#fff" d="M620.500 104V139M639.500 65V142M651 142L668 152M620.500 340V413M620.500 664V771M639.500 639V771" />

              <!-- 1850 dimension -->
              <path d="M64 127.500H870M893.500 65V140" />
              <path stroke="#a3242c" d="M893.500 140V347" />
              <path fill="#fff" stroke="none" d="M869 123L894 127.500L869 132Z" />

              <!-- stair stringers -->
              <path d="M1141 65L895 346M1146 65L895 352M1177 65L932 346M1182 65L936 346" />
              <path d="M806 452L525 770M621 666L529 770M806 490L561 770M806 494L565 770" />
              <path d="M1205 328L1040 516M1207 332L1040 521M1207 371L1040 557M1207 376L1040 562" />
              <path d="M1205 328L1217 335L1215 352L1208 368V376M1210 336V354" />
              <path d="M1150 702L1090 770M1163 702L1102 770M1172 702L1111 770M1177 702L1209 770" />
              <path stroke="#a4a4a4" d="M1149.500 102V391M1149.500 437V610M1168.500 80V371M1168.500 415V610" />

              <!-- posts -->
              <path d="M1205.500 65V683M1208.500 65V683M1231.500 65V680M1235.500 65V683M1256.500 65V683M1259.500 65V683M1284.500 65V683M1287.500 65V683" />
              <path d="M1136 609.500H1236M1286 609.500H1291.500V680H1288" />
              <circle cx="1272" cy="333" r="15" />
              <circle cx="1272" cy="333" r="12" />
              <path d="M1204 680.500H1236M1204 683.500H1291M1204 690.500H1338M1204 696.500H1336M1226.500 683V690M1251.500 683V690M1254.500 690V697M1290.500 683V697" />
              <path d="M1216.500 690V770M1223.500 690V770M1217 709.500H1223M1217 766.500H1223" />
              <path d="M1226.500 696V703L1296.500 735V770M1234.500 696V702L1304.500 735V770" />
              <path stroke="#a4a4a4" d="M1253.500 770V706.500H1292M1292.500 697V769.500H1253M1299 697Q1298 706 1290 706" />
              <path d="M1321 697Q1324 708 1335 708M1330 697Q1332 708 1342.500 708V766Q1334 766 1328 769M1335.500 697V770M1337.500 690V770" />
              <path d="M1266.500 770V741.500H1273.500V770M1355.500 770V741.500H1362.500V770" />

              <!-- level lines and right dimensions -->
              <path d="M1337.500 65V690M1407.500 65V690M1338 690.500H1600M1338 693.500H1600M1338 721.500H1600" />
              <path d="M1478 65L1477 81L1491 138.500H1600" />
              <g fill="#fff" stroke="none">
                <path d="M1336 65H1339L1343 78H1333ZM1332 664H1343L1338 690ZM1402 664H1412L1407 690Z" />
                <path d="M1504 690V668A22 22 0 0 1 1526 690ZM1504 690V712A22 22 0 0 1 1482 690Z" />
              </g>
              <circle cx="1504" cy="690" r="22" />
              <path d="M1504.500 655V725" />
              <path fill="#f00" stroke="none" d="M1418 645H1470L1444 690Z" />

              <!-- handrail and figure -->
              <path d="M657.500 663V770M659.500 663V770M684.500 631V770M687.500 631V770M660 657L671 628Q676 625 687 631M662 655L673 638Q678 633 685 633M662 655L676 640" />
              <path d="M638 687L627 718L610 770M624 700L627 718" />
              <path d="M759 548Q766 572 786 607M723 589L786 607L789 638L790 670L787 711L772 728Q752 746 735 770M799 501L806 513" />

              <!-- coordinate icon -->
              <path d="M84.500 680V748.500H151M84.500 665L78.500 680.500H90.500ZM151.500 742.500V754.500L167 748.500Z" />

              <path class="dashed" :d="outline" />
            </g>

            <g class="cad" transform="translate(-64 -65)">
              <text x="304" y="116">1850</text>
              <text transform="translate(1396 247) rotate(-90)">1390</text>
              <text transform="translate(1327 371) rotate(-90)">1000</text>
              <text class="axis" x="86" y="651">Y</text>
              <text class="axis" x="189" y="757">X</text>
            </g>

            <g transform="translate(-64 -65)">
              <rect v-for="([x, y], i) in grips" :key="i" class="grip" :x="x - 5" :y="y - 5" width="10" height="10" />
              <rect x="797" y="341" width="10" height="10" fill="#0f0" />
              <path class="marker" d="M788 243L752 314M750 287L752 314L773 308" />
            </g>
          </svg>

          <p class="note">Select the outline and<br />Right-Click on the mouse<br />to show the dialogue box<br />below, select accordingly</p>

          <div v-for="m in menus" :key="m.name" class="menu" :class="m.name" role="menu">
            <template v-for="(entry, i) in m.items" :key="i">
              <hr v-if="entry.divider" />
              <button v-else role="menuitem" class="entry" :class="{ active: entry.active }" :disabled="entry.disabled">
                <svg viewBox="0 0 16 16" v-html="entry.icon ? icons[entry.icon] : ''"></svg>
                <span class="label">{{ entry.before }}<u>{{ entry.key }}</u>{{ entry.after }}</span>
                <span v-if="entry.keys" class="keys">{{ entry.keys }}</span>
                <i v-if="entry.sub" class="arrow"></i>
              </button>
            </template>
          </div>

          <svg class="overlay">
            <ellipse class="marker" cx="946" cy="567" rx="218" ry="44" />
          </svg>
        </div>

        <nav class="tabs">
          <button class="step" aria-label="First"><svg viewBox="0 0 10 10"><path d="M1 1H3V9H1ZM9 1V9L4 5Z" /></svg></button>
          <button class="step" aria-label="Previous"><svg viewBox="0 0 10 10"><path d="M7 1V9L2 5Z" /></svg></button>
          <button class="step" aria-label="Next"><svg viewBox="0 0 10 10"><path d="M3 1V9L8 5Z" /></svg></button>
          <button class="step" aria-label="Last"><svg viewBox="0 0 10 10"><path d="M1 1V9L6 5ZM7 1H9V9H7Z" /></svg></button>
          <button
            v-for="name in ['Model', 'TITLE BLOCK']"
            :key="name"
            class="tab"
            :class="{ current: layout === name }"
            @click="layout = name"
          >
            <svg viewBox="0 0 100 16" preserveAspectRatio="none"><path d="M0 0L8 15.500H92L100 0" vector-effect="non-scaling-stroke" /></svg>
            <span>{{ name }}</span>
          </button>
        </nav>
      </section>

      <div class="docks right">
        <div v-for="(dock, d) in rightDocks" :key="d" class="dock">
          <div v-for="(bar, b) in dock" :key="b" class="vbar">
            <i class="vhandle"></i>
            <template v-for="(name, i) in bar" :key="i">
              <i v-if="name === '|'" class="vsep"></i>
              <button v-else class="vtool" :aria-label="name"><svg viewBox="0 0 16 16" v-html="icons[name]"></svg></button>
            </template>
          </div>
        </div>
      </div>
    </main>

    <section class="console">
      <div class="history">
        <span>Command:</span>
        <div class="vscroll">
          <button aria-label="Scroll up"><svg viewBox="0 0 8 4"><path d="M4 1L6 3H2Z" /></svg></button>
          <button aria-label="Scroll down"><svg viewBox="0 0 8 4"><path d="M2 1H6L4 3Z" /></svg></button>
        </div>
      </div>
      <div class="prompt">
        <input v-model="command" type="text" aria-label="Command line" />
        <div class="hscroll">
          <button aria-label="Scroll left"><svg viewBox="0 0 8 8"><path d="M6 0V8L2 4Z" /></svg></button>
          <button aria-label="Thumb"></button>
          <button class="end" aria-label="Scroll right"><svg viewBox="0 0 8 8"><path d="M2 0V8L6 4Z" /></svg></button>
        </div>
      </div>
    </section>

    <footer class="status"><span>Forces selected objects to be displayed behind all other objects:&nbsp; DRAWORDER</span></footer>

    <footer class="taskbar">
      <button class="task start"><svg viewBox="0 0 16 16" v-html="icons.flag"></svg>Start</button>
      <div class="quick">
        <button v-for="name in ['desktop', 'ie', 'player']" :key="name" class="tool" :aria-label="name">
          <svg viewBox="0 0 16 16" v-html="icons[name]"></svg>
        </button>
      </div>
      <span class="more">»</span>
      <button class="task window pressed"><svg viewBox="0 0 16 16" v-html="icons.acad"></svg>AutoCAD 2007 - [D:\S...</button>
      <button class="task window"><svg viewBox="0 0 16 16" v-html="icons.paint"></svg>Untitled - Paint</button>
      <div class="lang">
        <span>EN</span>
        <i class="groove"></i>
        <svg viewBox="0 0 16 16" v-html="icons.help"></svg>
        <i class="groove"></i>
        <svg class="small" viewBox="0 0 16 16" v-html="icons.restore"></svg>
      </div>
      <div class="tray">
        <span class="more">«</span>
        <svg viewBox="0 0 16 16" v-html="icons.trayNotes"></svg>
        <svg viewBox="0 0 16 16" v-html="icons.trayWarn"></svg>
        <i class="space"></i>
        <svg viewBox="0 0 16 16" v-html="icons.trayNet"></svg>
        <svg viewBox="0 0 16 16" v-html="icons.traySound"></svg>
        <time>10:39 PM</time>
      </div>
    </footer>
  </div>
</template>

<style>
body {
  background: #fff;
}
</style>

<style scoped>
.app {
  margin-right: 12px;
  overflow: hidden;
  background: #d4d0c8;
  color: #000;
  font-family: Roboto, "Liberation Sans", sans-serif;
  font-size: 11px;
}

.app *,
.app *::before {
  box-sizing: border-box;
}

button,
select,
input {
  margin: 0;
  padding: 0;
  border: 0;
  border-radius: 0;
  background: none;
  color: inherit;
  font: inherit;
}

/* horizontal toolbars */
.row {
  display: flex;
  height: 25px;
  gap: 1px;
  margin-top: 1px;
}

.row.clipped {
  height: 11px;
  align-items: flex-end;
  margin-top: 0;
}

.bar {
  display: flex;
  flex: none;
  align-items: center;
  height: 25px;
  padding-right: 2px;
  border-top: 1px solid #fff;
  border-right: 1px solid #808080;
  border-bottom: 1px solid #808080;
}

.tool,
.vtool {
  display: flex;
  flex: none;
  align-items: center;
  justify-content: center;
  width: 22px;
  height: 22px;
}

.tool svg,
.vtool svg {
  width: 16px;
  height: 16px;
  overflow: visible;
}

.sep {
  width: 2px;
  height: 18px;
  margin: 0 2px 0 1px;
  border-left: 1px solid #808080;
  border-right: 1px solid #fff;
}

.handle {
  width: 7px;
  height: 22px;
  margin: 0 3px;
  border: 2px outset #f4f2ee;
  border-width: 0 2px;
}

.combo {
  width: 96px;
  height: 21px;
  margin-left: 2px;
  appearance: none;
  border: 2px inset #a0a0a0;
  border-color: #606060 #e8e8e8 #e8e8e8 #606060;
  background:
    linear-gradient(#000, #000) right 7px top 9px / 1px 1px no-repeat,
    linear-gradient(#000, #000) right 6px top 8px / 3px 1px no-repeat,
    linear-gradient(#000, #000) right 5px top 7px / 5px 1px no-repeat,
    linear-gradient(#000, #000) right 4px top 6px / 7px 1px no-repeat,
    linear-gradient(#606060, #606060) right / 1px 100% no-repeat,
    linear-gradient(#d4d0c8, #d4d0c8) right / 15px 100% no-repeat,
    #fff;
}

.combo.wide {
  width: 132px;
}

.field {
  width: 134px;
  height: 21px;
  border-top: 2px solid #606060;
  border-left: 2px solid #606060;
  border-right: 1px solid #fff;
  border-bottom: 1px solid #fff;
  background: #d0cdc6;
}

/* work area */
.work {
  display: flex;
}

.docks {
  display: flex;
  flex: none;
  gap: 1px;
}

.docks.left {
  margin-left: -12px;
}

.docks.right {
  padding-left: 1px;
  border-left: 1px solid #fff;
}

.dock {
  width: 24px;
}

.vbar {
  display: flex;
  flex-direction: column;
  align-items: center;
  margin-bottom: 1px;
  padding-bottom: 2px;
  border: 1px solid #fff;
  border-right-color: #808080;
  border-bottom-color: #808080;
}

.vhandle {
  width: 18px;
  height: 7px;
  margin: 2px 0 1px;
  border: 0 solid #fff;
  border-width: 2px 0;
  border-bottom-color: #f4f2ee;
  box-shadow: 0 1px #808080;
}

.vtool {
  height: 21px;
}

.vsep {
  width: 18px;
  height: 2px;
  margin: 2px 0;
  border-top: 1px solid #808080;
  border-bottom: 1px solid #fff;
}

.drawing {
  display: flex;
  flex: 1;
  flex-direction: column;
  min-width: 0;
  border-left: 2px solid #606060;
}

.canvas {
  position: relative;
  flex: 1;
  min-height: 707px;
  border-top: 2px solid #606060;
  background: #000;
}

.sheet,
.overlay {
  position: absolute;
  inset: 0;
  width: 100%;
  height: 100%;
}

.overlay {
  pointer-events: none;
}

.dashed {
  stroke: #94602f;
  stroke-dasharray: 3 3;
}

.grip {
  fill: #0a3cf0;
  stroke: #4a6c9c;
}

.marker {
  fill: none;
  stroke: #e0212b;
  stroke-width: 5;
}

.cad {
  fill: #fff;
  stroke: #8a8a8a;
  font-family: Roboto, Lato, "Liberation Sans", sans-serif;
  font-size: 40px;
  font-weight: 100;
  text-anchor: middle;
}

.axis {
  stroke: none;
  font-size: 24px;
  font-weight: 300;
}

.note {
  position: absolute;
  top: 143px;
  left: 722px;
  width: 282px;
  margin: 0;
  padding: 5px 0 3px 3px;
  border: 4px solid #e0212b;
  color: #d62c3c;
  font-family: "Liberation Sans", Arial, sans-serif;
  font-size: 23px;
  line-height: 26px;
  white-space: nowrap;
}

/* menus */
.menu {
  position: absolute;
  padding: 2px 2px 1px;
  border: 1px solid #fff;
  border-right: 2px solid #505050;
  border-bottom: 2px solid #505050;
  background: #d4d0c8;
}

.context {
  top: 281px;
  left: 742px;
  width: 245px;
}

.order {
  top: 546px;
  left: 982px;
  width: 159px;
}

.menu hr {
  height: 2px;
  margin: 3px 1px 4px;
  border: 0;
  border-top: 1px solid #808080;
  border-bottom: 1px solid #fff;
}

.entry {
  display: flex;
  align-items: center;
  width: 100%;
  height: 19px;
  padding: 0 6px 0 2px;
  text-align: left;
  white-space: nowrap;
}

.entry svg {
  flex: none;
  width: 16px;
  height: 16px;
  margin-right: 4px;
}

.entry.active {
  background: #0a246a;
  color: #fff;
}

.entry:disabled {
  color: #8a8780;
  text-shadow: 1px 1px #fff;
}

.keys {
  margin-left: auto;
}

.arrow {
  margin-left: auto;
  border: 4px solid transparent;
  border-right: 0;
  border-left-color: currentColor;
}

/* layout tabs */
.tabs {
  display: flex;
  height: 16px;
  border-bottom: 1px solid #fff;
}

.step {
  width: 17px;
  border: 1px solid #fff;
  border-right-color: #808080;
  border-bottom-color: #808080;
}

.step svg {
  display: block;
  width: 10px;
  height: 10px;
  margin: auto;
}

.tab {
  position: relative;
  padding: 0 6px;
  line-height: 15px;
}

.tab svg {
  position: absolute;
  inset: 0;
  width: 100%;
  height: 100%;
  fill: #d4d0c8;
  stroke: #000;
}

.tab span {
  position: relative;
}

.step + .tab {
  margin-left: 4px;
}

.current {
  color: #fff;
}

.current svg {
  fill: #000;
}

/* command window */
.console {
  margin-top: 5px;
  padding: 10px 7px 1px 4px;
  border-top: 2px solid #303030;
  border-bottom: 1px solid #808080;
  font-family: "Liberation Mono", monospace;
  font-size: 12px;
}

.history {
  display: flex;
  justify-content: space-between;
  height: 23px;
  border: 1px solid #404040;
  border-width: 2px 1px 1px 2px;
  border-bottom-color: #808080;
  background: #fff;
  line-height: 15px;
}

.prompt {
  display: flex;
  height: 18px;
  margin-right: 15px;
  border-left: 2px solid #404040;
}

.prompt input {
  flex: 1;
  background: #fff;
}

.vscroll {
  display: flex;
  flex-direction: column;
  width: 15px;
}

.vscroll button,
.hscroll button,
.task {
  border: 1px solid #fff;
  border-right-color: #505050;
  border-bottom-color: #505050;
  background: #d4d0c8;
}

.vscroll button {
  display: flex;
  flex: 1;
  align-items: center;
  justify-content: center;
}

.vscroll svg {
  width: 8px;
  height: 4px;
}

.hscroll {
  display: flex;
  width: 62px;
  padding-left: 3px;
  background: #ebe9e4;
}

.hscroll button {
  width: 15px;
}

.hscroll svg {
  display: block;
  width: 8px;
  height: 8px;
  margin: auto;
}

.hscroll .end {
  margin-left: auto;
}

/* status and task bars */
.status {
  height: 23px;
  margin-left: -6px;
  border-top: 1px solid #fff;
  line-height: 24px;
}

.taskbar {
  display: flex;
  align-items: center;
  height: 25px;
  border-top: 1px solid #fff;
}

.taskbar svg {
  flex: none;
  width: 17px;
  height: 17px;
}

.task {
  display: flex;
  align-items: center;
  height: 22px;
  gap: 4px;
  padding-left: 3px;
  border-width: 1px 2px 2px 1px;
  white-space: nowrap;
}

.start {
  width: 51px;
  gap: 1px;
  margin-left: -11px;
  padding: 0;
  font-size: 12px;
  font-weight: 700;
}

.quick {
  display: flex;
  margin-left: 4px;
}

.more {
  font-size: 16px;
  font-weight: 700;
  line-height: 16px;
}

.quick + .more {
  width: 12px;
  margin: 0 0 6px 14px;
}

.window {
  width: 153px;
  margin-left: 1px;
}

.pressed {
  border-color: #404040 #fff #fff #404040;
  background: #ebe9e4;
  font-size: 12px;
  font-weight: 700;
}

.lang {
  display: flex;
  align-items: center;
  gap: 4px;
  margin-left: auto;
}

.groove {
  width: 2px;
  height: 21px;
  border-left: 1px solid #808080;
  border-right: 1px solid #fff;
}

.lang .small {
  width: 14px;
}

.tray {
  display: flex;
  align-items: center;
  height: 22px;
  gap: 1px;
  padding: 0 8px 0 3px;
  border: 1px solid #808080;
  border-right-color: #fff;
  border-bottom-color: #fff;
}

.space {
  width: 6px;
}

.tray time {
  margin-left: 2px;
}
</style>
